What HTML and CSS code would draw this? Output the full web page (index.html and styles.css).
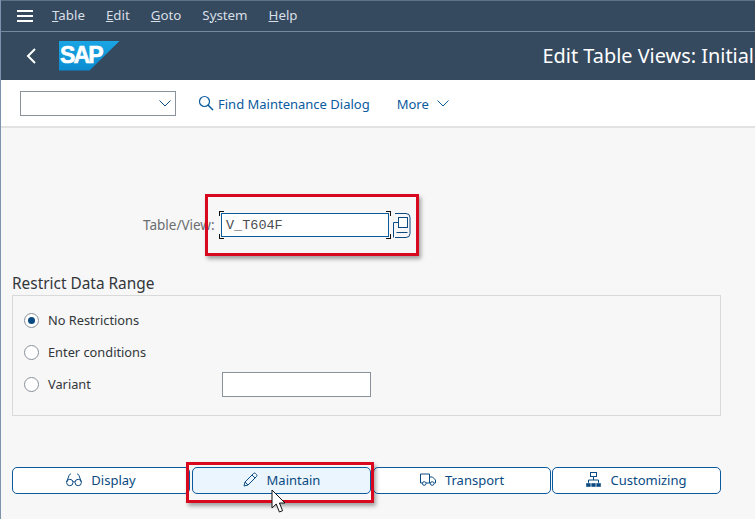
FILE: index.html
```html
<!DOCTYPE html>
<html lang="en">
<head>
<meta charset="utf-8">
<title>Edit Table Views: Initial</title>
<link rel="stylesheet" href="styles.css">
</head>
<body>
<div class="page">
  <header class="shell">
    <nav class="menubar">
      <svg class="burger" width="18" height="14" viewBox="0 0 18 14"><path d="M1 2h16M1 7h16M1 12h16" stroke="#fff" stroke-width="2" fill="none"/></svg>
      <span class="menu"><u>T</u>able</span>
      <span class="menu"><u>E</u>dit</span>
      <span class="menu"><u>G</u>oto</span>
      <span class="menu">S<u>y</u>stem</span>
      <span class="menu"><u>H</u>elp</span>
    </nav>
    <div class="titlebar">
      <svg class="back" width="12" height="18" viewBox="0 0 12 18"><path d="M10 2 3 9l7 7" stroke="#fff" stroke-width="2" fill="none"/></svg>
      <div class="logo"><span>SAP</span></div>
      <h1 class="title">Edit Table Views: Initial</h1>
    </div>
  </header>
  <div class="toolbar">
    <div class="select">
      <svg width="12" height="7" viewBox="0 0 12 7"><path d="M.5.5 6 6 11.500.5" stroke="#0a4a82" fill="none"/></svg>
    </div>
    <svg class="search" width="16" height="16" viewBox="0 0 16 16"><circle cx="6.500" cy="6.500" r="5" stroke="#0a5a9e" stroke-width="1.200" fill="none"/><path d="m10 10 5 5" stroke="#0a5a9e" stroke-width="1.500"/></svg>
    <span class="tool-link find">Find Maintenance Dialog</span>
    <span class="tool-link more">More</span>
    <svg width="12" height="7" viewBox="0 0 12 7"><path d="M.5.5 6 6 11.500.5" stroke="#0a5a9e" fill="none"/></svg>
  </div>
  <main class="content">
    <div class="table-row">
      <label class="table-label">Table/View:</label>
      <div class="field">
        <span class="field-value">V_T604F</span>
        <i class="corner tl"></i><i class="corner tr"></i><i class="corner bl"></i><i class="corner br"></i>
      </div>
      <div class="f4">
        <svg width="19" height="25" viewBox="0 0 19 25"><path d="M1.500 24.500V9.500H6.500M4.500 19.500H15.500" stroke="#0a4a82" fill="none"/><rect x="6.500" y="4.500" width="9" height="10" stroke="#0a4a82" fill="#fff"/><path d="M3 .5h11a4 4 0 0 1 4 4v16a4 4 0 0 1-4 4H3" stroke="#0a4a82" fill="none"/></svg>
      </div>
    </div>
    <h2 class="group-title">Restrict Data Range</h2>
    <section class="group">
      <div class="radio-row"><span class="radio on"></span><span class="radio-text">No Restrictions</span></div>
      <div class="radio-row"><span class="radio"></span><span class="radio-text">Enter conditions</span></div>
      <div class="radio-row"><span class="radio"></span><span class="radio-text variant">Variant</span><span class="plain-input"></span></div>
    </section>
    <div class="buttons">
      <button class="btn b-display">
        <svg width="16" height="14" viewBox="0 0 16 14"><circle cx="3.800" cy="9.500" r="3.200" stroke="#0a4a82" fill="none"/><circle cx="12.200" cy="9.500" r="3.200" stroke="#0a4a82" fill="none"/><path d="M7 9c.6-.6 1.400-.6 2 0M.7 9 3 2.500C3.300 1.500 4 1 5 1M15.300 9 13 2.500C12.700 1.500 12 1 11 1" stroke="#0a4a82" fill="none"/></svg>
        Display
      </button>
      <button class="btn b-maintain active">
        <svg width="15" height="15" viewBox="0 0 15 15"><path d="M1 14l1-4L10.500 1.500a1.400 1.400 0 0 1 2 0l1 1a1.400 1.400 0 0 1 0 2L5 13ZM9 3l3 3M2 10l3 3" stroke="#0a4a82" fill="none"/></svg>
        Maintain
      </button>
      <button class="btn b-transport">
        <svg width="16" height="13" viewBox="0 0 16 13"><path d="M2.500 10H.5V1h9v9H6M9.500 4h3l3 3v3h-1.200M9.500 10h1" stroke="#0a4a82" fill="none"/><circle cx="4.200" cy="10.500" r="1.800" stroke="#0a4a82" fill="none"/><circle cx="12.200" cy="10.500" r="1.800" stroke="#0a4a82" fill="none"/></svg>
        Transport
      </button>
      <button class="btn b-custom">
        <svg width="15" height="15" viewBox="0 0 15 15"><rect x="4.500" y=".5" width="6" height="4" stroke="#0a4a82" fill="none"/><path d="M7.500 4.500V8M2.500 11V8h10v3" stroke="#0a4a82" fill="none"/><path d="M0 11h5v4H0zM5 11h5v4H5zM10 11h5v4h-5z" fill="#0a4a82" stroke="#fff" stroke-width=".4"/></svg>
        Customizing
      </button>
    </div>
  </main>
  <div class="highlight h-field"></div>
  <div class="highlight h-maintain"></div>
  <svg class="cursor" width="17" height="25" viewBox="0 0 17 25"><path d="M1 1v18l4.200-4 3.200 8 3.200-1.300-3.200-7.700H14Z" fill="#fff" stroke="#111"/></svg>
</div>
</body>
</html>
```
FILE: styles.css
```css
* { box-sizing: border-box; }
html, body { margin: 0; padding: 0; }
body { font-family: "Noto Sans", "Open Sans", sans-serif; font-size: 13px; color: #32363a; }
.page { position: relative; width: 755px; height: 519px; overflow: hidden; background: #f7f7f7; border-left: 1px solid #7d93ad; }

.shell { background: #354a5f; color: #fff; }
.menubar { height: 32px; display: flex; align-items: center; padding: 0 0 1px 15px; border-top: 1px solid #5e7186; border-bottom: 1px solid #76889b; }
.burger { margin-right: 18px; }
.menu { font-size: 13.300px; line-height: 18px; padding-bottom: 2px; color: #d9dfe6; margin-right: 21px; }
.titlebar { height: 48px; display: flex; align-items: center; padding-left: 24px; }
.back { margin-right: 22px; }
.logo { width: 61px; height: 30px; background: linear-gradient(#1aa5e4, #0b8bd0); clip-path: polygon(0 0, 100% 0, 50% 100%, 0 100%); margin-top: -1px; }
.logo span { display: block; font: 900 23px/29px "Liberation Sans", sans-serif; color: #fff; letter-spacing: -1.800px; padding-left: 1px; -webkit-text-stroke: .6px #fff; }
.title { margin: -2px 0 0 auto; font-size: 19.900px; font-weight: 400; color: #fff; white-space: nowrap; padding-right: 1px; }

.toolbar { height: 48px; background: #fff; border-bottom: 2px solid #e2e2e2; display: flex; align-items: center; padding-left: 19px; }
.select { width: 156px; height: 25px; border: 1px solid #89919a; display: flex; align-items: center; justify-content: flex-end; padding-right: 4px; margin-right: 22px; }
.search { margin-right: 4px; }
.tool-link { font-size: 13px; padding-top: 2px; color: #0a5a9e; }
.more { margin: 0 8px 0 27px; }

.content { padding: 84px 0 0 11px; }
.table-row { display: flex; align-items: center; height: 26px; }
.table-label { width: 78px; font-size: 13.500px; color: #6a6d70; margin-left: 131px; text-align: left; }
.field { position: relative; width: 168px; height: 24px; background: #fff; border: 1px solid #0a5a9e; display: flex; align-items: center; padding-left: 4px; }
.field-value { font: 13.500px "Liberation Mono", monospace; color: #4a4e52; }
.corner { position: absolute; width: 5px; height: 5px; border: 0 solid #111; }
.tl { left: -3px; top: -3px; border-width: 1px 0 0 1px; }
.tr { right: -3px; top: -3px; border-width: 1px 1px 0 0; }
.bl { left: -3px; bottom: -3px; border-width: 0 0 1px 1px; }
.br { right: -3px; bottom: -3px; border-width: 0 1px 1px 0; }
.f4 { width: 19px; height: 25px; margin-left: 3px; }
.f4 svg { display: block; }

.group-title { margin: 36px 0 0; font-size: 15.400px; font-weight: 400; line-height: 20px; color: #32363a; }
.group { width: 709px; height: 121px; border: 1px solid #d9d9d9; margin-top: 1px; padding: 8px 0 0 11px; }
.radio-row { display: flex; align-items: center; height: 32px; }
.radio { width: 15px; height: 15px; border-radius: 50%; border: 1px solid #89919a; background: #fff; margin-right: 9px; position: relative; }
.radio.on::after { content: ""; position: absolute; left: 3px; top: 3px; width: 7px; height: 7px; border-radius: 50%; background: #0a4a82; }
.radio-text { font-size: 12.800px; color: #32363a; }
.variant { width: 174px; }
.plain-input { width: 149px; height: 25px; background: #fff; border: 1px solid #89919a; }

.buttons { display: flex; gap: 2px; margin-top: 51px; }
.btn { height: 27px; border: 1px solid #0a5a9e; border-radius: 5px; background: #fff; color: #0a4a82; font: 13px "Noto Sans", sans-serif; display: flex; align-items: center; justify-content: center; gap: 9px; padding: 0 0 2px; }
.b-display { width: 178px; }
.b-maintain { width: 179px; }
.b-transport { width: 178px; }
.b-custom { width: 169px; margin-left: -1px; }
.active { background: #ebf5fe; }

.highlight { position: absolute; border: 3px solid #d8091f; box-shadow: 2px 3px 4px rgba(0,0,0,.35); }
.h-field { left: 204px; top: 194px; width: 214px; height: 62px; }
.h-maintain { left: 185px; top: 462px; width: 188px; height: 41px; }
.cursor { position: absolute; left: 270px; top: 489px; }
```
